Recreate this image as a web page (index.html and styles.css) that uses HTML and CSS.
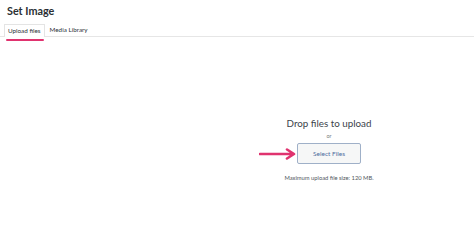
FILE: index.html
```html
<!DOCTYPE html>
<html>
<head>
<meta charset="utf-8">
<link rel="stylesheet" href="styles.css">
</head>
<body>
<div class="modal">
  <h1 class="title">Set Image</h1>
  <div class="tabs">
    <div class="tab active">Upload files<span class="mark"></span></div>
    <div class="tab">Media Library</div>
  </div>
  <div class="body">
    <div class="drop">
      <div class="drop-title">Drop files to upload</div>
      <div class="or">or</div>
      <div class="btn-row">
        <svg class="arrow" width="38" height="12" viewBox="0 0 38 12">
          <path d="M1 6 H34 M28 1.5 L35 6 L28 10.5" fill="none" stroke="#e0336f" stroke-width="2.6" stroke-linecap="round" stroke-linejoin="round"/>
        </svg>
        <button class="btn">Select Files</button>
      </div>
      <div class="max">Maximum upload file size: 120 MB.</div>
    </div>
  </div>
</div>
</body>
</html>
```
FILE: styles.css
```css
* { box-sizing: border-box; }
html, body { margin: 0; padding: 0; background: #fff; }
body { width: 474px; height: 243px; overflow: hidden; font-family: Lato, "Noto Sans", sans-serif; color: #1e1e1e; }
.modal { display: flex; flex-direction: column; height: 100%; }
.title { margin: 0; padding: 3px 0 0 7px; font-size: 10.8px; font-weight: 700; line-height: 16px; color: #2a2f33; }
.tabs { display: flex; align-items: flex-end; padding-left: 4px; margin-top: 4px; border-bottom: 1px solid #e6e6e6; height: 14px; }
.tab { position: relative; font-size: 6.3px; line-height: 12px; padding: 0 3px; color: #2c3338; }
.tab.active { border: 1px solid #e4e4e4; border-bottom: none; background: #fff; margin-bottom: -1px; height: 13px; margin-right: 2px; }
.mark { position: absolute; left: 1px; right: 0; bottom: -4px; height: 2.5px; border-radius: 2px; background: #e0336f; }
.body { flex: 1; display: flex; padding-left: 184px; }
.drop { flex: 1; display: flex; flex-direction: column; align-items: center; padding-top: 80px; }
.drop-title { font-size: 9.8px; line-height: 13px; color: #3c434a; }
.or { font-size: 5.5px; line-height: 8px; margin-top: 2px; color: #787c82; }
.btn-row { position: relative; margin-top: 3px; }
.arrow { position: absolute; right: 100%; top: 5px; margin-right: 0px; }
.btn { display: block; width: 64px; height: 21px; border: 1px solid #9fb0c8; border-radius: 2px; background: #f6f7f7; font-family: inherit; font-size: 6.5px; color: #4f6ea0; padding: 0; }
.max { font-size: 5.8px; line-height: 8px; margin-top: 10px; color: #50575e; }
```
